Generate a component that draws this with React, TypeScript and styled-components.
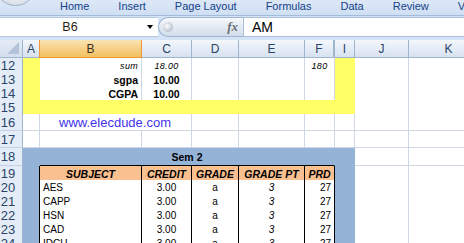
import React from 'react';
import styled, { createGlobalStyle } from 'styled-components';

const FONT = '"Liberation Sans", Arial, sans-serif';
const GRID = '#d0d7e5';
const HEAD_LINE = '#9eb6ce';
const YELLOW = '#ffff66';
const STEEL = '#95b3d7';
const PEACH = '#fac090';
const INK = '#000000';

// row header, A, B, C, D, E, F, I, J, K
const COLS = '23px 17px 102px 50px 47px 66px 30px 20px 54px 80px';

type Kind = 'plain' | 'note' | 'strong' | 'head' | 'title' | 'link' | 'data' | 'mark';
type Align = 'left' | 'center' | 'right';

interface Spec {
  t?: string;
  fill?: string;
  edge?: string;
  base?: string;
  align?: Align;
  kind?: Kind;
  span?: number;
}

interface RowSpec {
  n: number;
  h: number;
  cells: Spec[];
}

const GlobalStyle = createGlobalStyle`
  html, body {
    margin: 0;
    padding: 0;
    background: #d4e3f5;
    overflow: hidden;
  }
  * { box-sizing: border-box; }
`;

const fill = (c: string): Spec => ({ fill: c, edge: c, base: c });
const boxed = (s: Spec): Spec => ({ edge: INK, base: INK, ...s });
const steelEdge: Spec = { fill: STEEL, edge: INK, base: STEEL };

const head = (t: string): Spec => boxed({ t, kind: 'head', align: 'center', fill: PEACH });

const subject = (name: string): Spec[] => [
  steelEdge,
  boxed({ t: name, kind: 'data', align: 'left' }),
  boxed({ t: '3.00', kind: 'data', align: 'center' }),
  boxed({ t: 'a', kind: 'data', align: 'center' }),
  boxed({ t: '3', kind: 'mark', align: 'center' }),
  boxed({ t: '27', kind: 'data', align: 'right' }),
  fill(STEEL),
  {},
  {},
];

const ROWS: RowSpec[] = [
  {
    n: 12,
    h: 14,
    cells: [
      fill(YELLOW),
      { t: 'sum', kind: 'note', align: 'right' },
      { t: '18.00', kind: 'note', align: 'center' },
      {},
      {},
      { t: '180', kind: 'note', align: 'center' },
      fill(YELLOW),
      {},
      {},
    ],
  },
  {
    n: 13,
    h: 14,
    cells: [
      fill(YELLOW),
      { t: 'sgpa', kind: 'strong', align: 'right' },
      { t: '10.00', kind: 'strong', align: 'center' },
      {},
      {},
      {},
      fill(YELLOW),
      {},
      {},
    ],
  },
  {
    n: 14,
    h: 14,
    cells: [
      fill(YELLOW),
      { t: 'CGPA', kind: 'strong', align: 'right' },
      { t: '10.00', kind: 'strong', align: 'center' },
      {},
      {},
      {},
      fill(YELLOW),
      {},
      {},
    ],
  },
  {
    n: 15,
    h: 14,
    cells: [fill(YELLOW), fill(YELLOW), fill(YELLOW), fill(YELLOW), fill(YELLOW), fill(YELLOW), fill(YELLOW), {}, {}],
  },
  {
    n: 16,
    h: 17,
    cells: [{}, { t: 'www.elecdude.com', kind: 'link', align: 'left', span: 2 }, {}, {}, {}, {}, {}, {}],
  },
  { n: 17, h: 17, cells: [{}, {}, {}, {}, {}, {}, {}, {}, {}] },
  {
    n: 18,
    h: 18,
    cells: [
      fill(STEEL),
      { t: 'Sem 2', kind: 'title', align: 'center', fill: STEEL, edge: STEEL, base: INK, span: 5 },
      fill(STEEL),
      {},
      {},
    ],
  },
  {
    n: 19,
    h: 14,
    cells: [steelEdge, head('SUBJECT'), head('CREDIT'), head('GRADE'), head('GRADE PT'), head('PRD'), fill(STEEL), {}, {}],
  },
  { n: 20, h: 14, cells: subject('AES') },
  { n: 21, h: 14, cells: subject('CAPP') },
  { n: 22, h: 14, cells: subject('HSN') },
  { n: 23, h: 14, cells: subject('CAD') },
  { n: 24, h: 14, cells: subject('IDCU') },
];

const LETTERS = ['A', 'B', 'C', 'D', 'E', 'F', 'I', 'J', 'K'];
const TABS = ['Home', 'Insert', 'Page Layout', 'Formulas', 'Data', 'Review', 'View'];

export default function App() {
  return (
    <Window>
      <GlobalStyle />
      <TabBar>
        <OfficeButton />
        {TABS.map((tab) => (
          <Tab key={tab}>{tab}</Tab>
        ))}
      </TabBar>

      <FormulaBar>
        <NameBox>
          <NameText>B6</NameText>
          <DropArrow />
        </NameBox>
        <FxPill>
          <Grip />
          <FxLabel>fx</FxLabel>
        </FxPill>
        <FormulaInput>AM</FormulaInput>
      </FormulaBar>

      <Sheet>
        <Row $h={18}>
          <Corner />
          {LETTERS.map((l) => (
            <ColHead key={l} $sel={l === 'B'} $hidden={l === 'F'}>
              {l}
            </ColHead>
          ))}
        </Row>
        {ROWS.map((row) => (
          <Row key={row.n} $h={row.h}>
            <RowHead>{row.n}</RowHead>
            {row.cells.map((c, i) => (
              <Cell
                key={i}
                $fill={c.fill ?? '#ffffff'}
                $edge={c.edge ?? GRID}
                $base={c.base ?? GRID}
                $align={c.align ?? 'left'}
                $kind={c.kind ?? 'plain'}
                $span={c.span ?? 1}
              >
                {c.t}
              </Cell>
            ))}
          </Row>
        ))}
      </Sheet>
    </Window>
  );
}

const Window = styled.div`
  width: 464px;
  height: 243px;
  overflow: hidden;
  font-family: ${FONT};
  background: #d4e3f5;
`;

const TabBar = styled.div`
  position: relative;
  height: 16px;
  display: flex;
  align-items: flex-start;
  gap: 29px;
  padding-left: 60px;
  background: linear-gradient(to bottom, #dde8f6, #cfdff3);
  border-bottom: 1px solid #a3bcdb;
`;

const OfficeButton = styled.div`
  position: absolute;
  left: -5px;
  top: -35px;
  width: 41px;
  height: 41px;
  border-radius: 50%;
  border: 1px solid #9db1c9;
  background: radial-gradient(circle at 50% 30%, #ffffff 0%, #eef1f5 55%, #c9d2de 100%);
`;

const Tab = styled.span`
  font-size: 11px;
  line-height: 13px;
  color: #15428b;
  white-space: nowrap;
`;

const FormulaBar = styled.div`
  height: 24px;
  display: flex;
  padding: 1px 0 3px;
  background: #d4e3f5;
`;

const NameBox = styled.div`
  width: 158px;
  display: flex;
  align-items: center;
  background: #ffffff;
  border-top: 1px solid #b7c9e0;
  border-bottom: 1px solid #b7c9e0;
`;

const NameText = styled.span`
  width: 140px;
  text-align: center;
  font-size: 12.5px;
  color: #2a1f12;
`;

const DropArrow = styled.span`
  width: 0;
  height: 0;
  margin-left: 7px;
  border-left: 3.5px solid transparent;
  border-right: 3.5px solid transparent;
  border-top: 4px solid #000000;
`;

const FxPill = styled.div`
  width: 85px;
  display: flex;
  align-items: center;
  justify-content: space-between;
  padding: 0 5px 0 4px;
  border: 1px solid #9db3cf;
  border-right: none;
  border-radius: 10px 0 0 10px;
  background: linear-gradient(to bottom, #f6f9fc, #e3eaf3 50%, #d2ddea);
`;

const Grip = styled.span`
  width: 10px;
  height: 10px;
  border-radius: 50%;
  background: radial-gradient(circle at 40% 40%, #ffffff, #c3cbd5 60%, #9aa6b4);
`;

const FxLabel = styled.span`
  font-family: "Liberation Serif", "Times New Roman", serif;
  font-style: italic;
  font-weight: bold;
  font-size: 13px;
  color: #6b6f75;
`;

const FormulaInput = styled.div`
  flex: 1;
  display: flex;
  align-items: center;
  padding-left: 8px;
  background: #ffffff;
  border: 1px solid #a9bfdb;
  border-right: none;
  font-size: 14px;
  color: #000000;
`;

const Sheet = styled.div`
  background: #ffffff;
`;

const Row = styled.div<{ $h: number }>`
  display: grid;
  grid-template-columns: ${COLS};
  height: ${(p) => p.$h}px;
`;

const Corner = styled.div`
  position: relative;
  background: linear-gradient(to bottom, #e4ebf5, #d4dfee);
  border-right: 1px solid ${HEAD_LINE};
  border-bottom: 1px solid ${HEAD_LINE};
  &::after {
    content: '';
    position: absolute;
    right: 3px;
    bottom: 3px;
    width: 0;
    height: 0;
    border-left: 12px solid transparent;
    border-bottom: 12px solid #b3c4da;
  }
`;

const ColHead = styled.div<{ $sel: boolean; $hidden: boolean }>`
  display: flex;
  align-items: center;
  justify-content: center;
  font-size: 12px;
  color: ${(p) => (p.$sel ? '#3b3120' : '#2b4468')};
  background: ${(p) =>
    p.$sel
      ? 'linear-gradient(to bottom, #fbe3b3, #f6cf84 55%, #f1c15f)'
      : 'linear-gradient(to bottom, #f4f7fc, #e3ebf6 55%, #d8e2ef)'};
  border-right: ${(p) => (p.$hidden ? '2px' : '1px')} solid ${(p) => (p.$sel ? '#f29536' : HEAD_LINE)};
  border-bottom: 1px solid ${(p) => (p.$sel ? '#f29536' : HEAD_LINE)};
  ${(p) => (p.$sel ? 'border-left: 1px solid #f29536; margin-left: -1px;' : '')}
`;

const RowHead = styled.div`
  display: flex;
  align-items: center;
  justify-content: center;
  padding-right: 6px;
  font-size: 13px;
  color: #2b4468;
  background: #e4ecf7;
  border-right: 1px solid ${HEAD_LINE};
  border-bottom: 1px solid #c2d1e4;
`;

const KIND_FONT: Record<Kind, string> = {
  plain: 'font-size: 10px;',
  note: 'font-size: 9px; font-style: italic; letter-spacing: 0.3px;',
  strong: 'font-size: 10.5px; font-weight: bold;',
  head: 'font-size: 10.5px; font-weight: bold; font-style: italic;',
  title: 'font-size: 10.5px; font-weight: bold;',
  link: 'font-size: 13px; color: #4433ee; padding-left: 19px !important;',
  data: 'font-size: 10px;',
  mark: 'font-size: 10px; font-style: italic;',
};

const JUSTIFY: Record<Align, string> = {
  left: 'flex-start',
  center: 'center',
  right: 'flex-end',
};

const Cell = styled.div<{
  $fill: string;
  $edge: string;
  $base: string;
  $align: Align;
  $kind: Kind;
  $span: number;
}>`
  grid-column: span ${(p) => p.$span};
  display: flex;
  align-items: center;
  justify-content: ${(p) => JUSTIFY[p.$align]};
  padding: 0 3px;
  overflow: hidden;
  white-space: nowrap;
  color: #000000;
  background: ${(p) => p.$fill};
  border-right: 1px solid ${(p) => p.$edge};
  border-bottom: 1px solid ${(p) => p.$base};
  ${(p) => KIND_FONT[p.$kind]}
`;
